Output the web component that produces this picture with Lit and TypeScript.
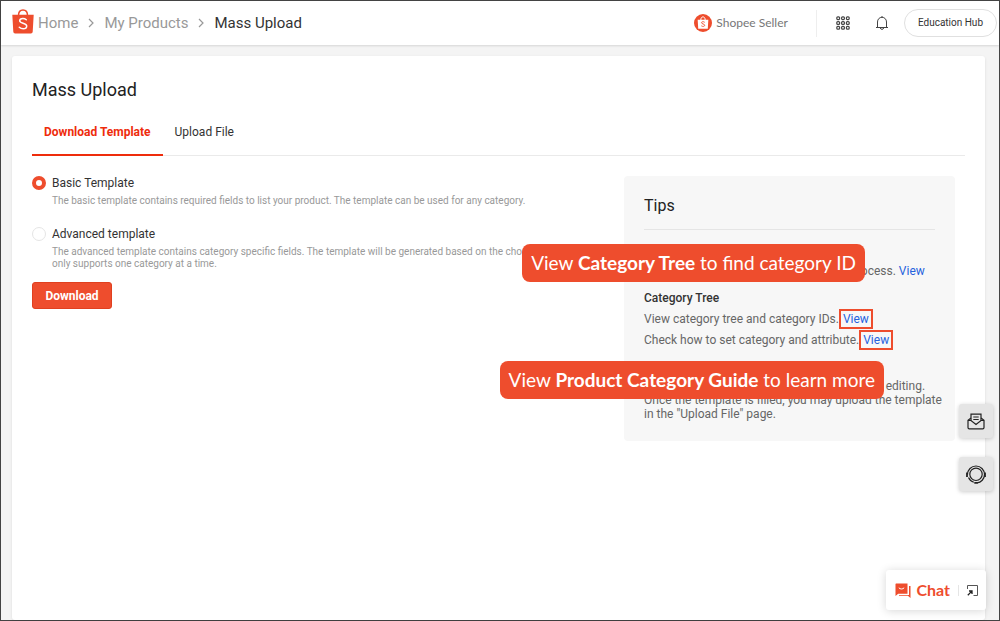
import { LitElement, html, css, svg } from "lit";
import { customElement, state } from "lit/decorators.js";

const bagIcon = html`<svg class="logo" viewBox="0 0 22 25" aria-hidden="true">
  <path d="M6.500 6.500C6.500 3 8.500 1 11 1s4.500 2 4.500 5.500" fill="none" stroke="#ee4d2d" stroke-width="1.500"/>
  <path d="M0.300 5.800h21.400l-1 17a1.800 1.800 0 0 1-1.800 1.700H3.100a1.800 1.800 0 0 1-1.800-1.700z" fill="#ee4d2d"/>
  <path d="M14.300 10.700c-1-.9-2.100-1.300-3.400-1.300-1.900 0-3.200.9-3.200 2.300 0 3.200 7 1.800 7 5.300 0 1.700-1.500 2.800-3.500 2.800-1.600 0-2.900-.6-3.900-1.500" fill="none" stroke="#fff" stroke-width="1.500" stroke-linecap="round"/>
</svg>`;

const sellerIcon = html`<svg class="seller-icon" viewBox="0 0 18 18" aria-hidden="true">
  <circle cx="9" cy="9" r="9" fill="#ee4d2d"/>
  <path d="M6.800 6C6.800 4 7.700 2.900 9 2.900S11.200 4 11.200 6" fill="none" stroke="#fff"/>
  <path d="M3.700 5.700h10.600l-.5 9H4.200z" fill="#fff"/>
  <path d="M10.700 8.300C9.500 7.300 7.500 7.600 7.500 8.700c0 1.500 3.200 1 3.200 2.600 0 1.300-2.200 1.500-3.400.5" fill="none" stroke="#ee4d2d" stroke-width=".9"/>
</svg>`;

const chevron = html`<svg class="chevron" viewBox="0 0 6 10" aria-hidden="true">
  <path d="M1 1l4 4-4 4" fill="none" stroke="#999" stroke-width="1.200"/>
</svg>`;

const dots = [2.2, 7, 11.8];
const gridIcon = html`<svg width="14" height="14" viewBox="0 0 14 14" fill="none" stroke="#444" stroke-width="1.200" aria-hidden="true">
  ${dots.map((y) => dots.map((x) => svg`<rect x=${x - 1.4} y=${y - 1.4} width="2.800" height="2.800" rx="1"/>`))}
</svg>`;

const bellIcon = html`<svg width="12" height="14" viewBox="0 0 12 14" fill="none" stroke="#444" aria-hidden="true">
  <path d="M0 11.500h12M1.500 11.500V6C1.500 3.300 3.400 1.300 6 1.300S10.500 3.300 10.500 6v5.500M6 0v1.300M4.300 12c.3 1.800 3.100 1.800 3.400 0"/>
</svg>`;

const mailIcon = html`<svg width="18" height="17" viewBox="0 0 18 17" fill="none" stroke="#222" stroke-width="1.200" aria-hidden="true">
  <path d="M4 5L1 7.300V14.500a1.300 1.300 0 0 0 1.300 1.300h13.400a1.300 1.300 0 0 0 1.300-1.300V7.300L14 5M1 7.500l3 0 5 4 5-4h3"/>
  <path d="M4 7.500V1.200h10v6.300M6.300 4h5.400M6.300 6.500h5.400"/>
</svg>`;

const headsetIcon = html`<svg width="20" height="19" viewBox="0 0 20 19" fill="none" stroke="#222" aria-hidden="true">
  <path d="M1.500 9.500a8.500 8.500 0 0 1 17 0c0 4.500-3.500 8-7.500 8.300M2.500 12.500c1 2.300 3 4 5.300 4.700" stroke-width="1.200"/>
  <circle cx="10" cy="9.300" r="6.200" stroke-width="1.200"/>
  <path d="M1 7.500v4.500M19 7.500v4.500M8.300 17.800h3.400" stroke-width="1.800"/>
</svg>`;

const chatIcon = html`<svg width="16" height="15" viewBox="0 0 16 15" aria-hidden="true">
  <path d="M1 .5h11.500v10.300H3.200L.5 13V1z" fill="#ee4d2d"/>
  <path d="M14 3h1.500v12l-2.700-2.200H4V12h10z" fill="#ee4d2d"/>
  <path d="M3.800 4.800c1.500 1.600 3.800 1.600 5.400 0" fill="none" stroke="#fff"/>
</svg>`;

const expandIcon = html`<svg width="11" height="11" viewBox="0 0 11 11" fill="none" stroke="#555" aria-hidden="true">
  <path d="M.5 4V.5h10v10H6.500"/>
  <path d="M.8 10.200L4.600 6.400M2 6h3v3" stroke="#222" stroke-width="1.300"/>
</svg>`;

interface TemplateOption {
  id: string;
  title: string;
  note: string;
}

const templates: TemplateOption[] = [
  {
    id: "basic",
    title: "Basic Template",
    note: "The basic template contains required fields to list your product. The template can be used for any category.",
  },
  {
    id: "advanced",
    title: "Advanced template",
    note: "The advanced template contains category specific fields. The template will be generated based on the chosen category and only supports one category at a time.",
  },
];

@customElement("app-root")
export class AppRoot extends LitElement {
  @state() private selected = "basic";

  static styles = css`
    :host {
      display: flex;
      flex-direction: column;
      position: relative;
      box-sizing: border-box;
      min-height: 100vh;
      border: 1px solid #444;
      background: #f4f4f4;
      color: #333;
      font: 12px/14px Roboto, sans-serif;
    }
    * { box-sizing: border-box; }
    h1, h2, h3, p { margin: 0; font-weight: 400; }
    svg { display: block; flex: none; }
    button { font: inherit; color: inherit; background: none; border: 0; padding: 0; cursor: pointer; }
    a { color: #2662dd; text-decoration: none; }

    header {
      display: flex;
      align-items: center;
      height: 44px;
      padding: 0 2px 0 11px;
      background: #fff;
      box-shadow: 0 1px 2px rgba(0, 0, 0, 0.12);
    }
    .logo { width: 22px; height: 25px; margin: 0 4px 4px 0; }
    .crumbs { display: flex; align-items: center; gap: 10px; font-size: 15px; line-height: 18px; }
    .crumbs a { color: #999; }
    .chevron { width: 6px; height: 10px; }
    .seller { display: flex; align-items: center; gap: 4px; margin-left: auto; color: #777; font: 12px/18px Lato, sans-serif; }
    .seller-icon { width: 18px; height: 18px; }
    .tools { display: flex; align-items: center; gap: 26px; margin-left: 28px; padding-left: 19px; height: 27px; border-left: 1px solid #eee; }
    .hub { height: 28px; margin-left: 16px; padding: 0 13px; border: 1px solid #e0e0e0; border-radius: 14px; font-size: 10px; }

    .card {
      flex: 1;
      margin: 11px 14px 0 11px;
      padding: 23px 20px;
      background: #fff;
      border-radius: 3px;
      box-shadow: 0 1px 3px rgba(0, 0, 0, 0.1);
    }
    h1 { font-size: 18px; line-height: 22px; color: #222; }
    .tabs { display: flex; margin-top: 9px; border-bottom: 1px solid #eaeaea; }
    .tab { height: 46px; padding: 0 12px; margin-bottom: -1px; border-bottom: 2px solid transparent; }
    .tab.active { color: #ee2c0c; font-weight: 700; border-color: #ee2c0c; }
    .columns { display: flex; justify-content: space-between; align-items: flex-start; padding: 20px 10px 0 0; }
    form { flex: 0 1 580px; padding-right: 10px; }
    .option { display: grid; grid-template-columns: 14px 1fr; column-gap: 6px; row-gap: 5px; margin-bottom: 20px; align-items: center; }
    .option input {
      appearance: none;
      width: 14px;
      height: 14px;
      margin: 0;
      border: 1px solid #e5e5e5;
      border-radius: 50%;
      background: #fff;
    }
    .option input:checked { border: 4px solid #ee4d2d; }
    .note { grid-column: 2; color: #999; font-size: 10px; line-height: 12px; }
    .option:last-of-type { margin-bottom: 12px; }
    .download {
      width: 80px;
      height: 27px;
      border: 1px solid #e0401f;
      border-radius: 3px;
      background: #ee4d2d;
      color: #fff;
      font-weight: 700;
    }

    .tips { flex: 0 0 331px; padding: 20px 10px 20px 20px; border-radius: 4px; background: #f7f7f7; color: #666; }
    .tips h2 { margin: 0 10px 10px 0; padding-bottom: 13px; border-bottom: 1px solid #e5e5e5; color: #222; font-size: 16px; line-height: 20px; }
    .tips h3 { color: #333; font-size: 12px; line-height: 20px; font-weight: 500; }
    .tips section { display: grid; gap: 1px; }
    .tips section + section { margin-top: 7px; }
    .tips section p { line-height: 20px; }
    .tips section .block { padding-top: 1px; line-height: 14px; }
    .marked { outline: 2px solid #ee4d2d; outline-offset: 1px; padding: 0 1px; }

    .callout {
      position: absolute;
      height: 38px;
      padding: 0 9px;
      border-radius: 8px;
      background: #ee4d2d;
      color: #fff;
      font: 19px/38px Lato, sans-serif;
      white-space: nowrap;
    }
    .callout.tree { top: 243px; right: 134px; }
    .callout.guide { top: 360px; right: 115px; }

    .side { position: absolute; right: 6px; top: 403px; display: grid; gap: 19px; }
    .side button {
      display: grid;
      place-items: center;
      width: 34px;
      height: 34px;
      border-radius: 3px;
      background: #e5e5e5;
      box-shadow: 0 1px 4px rgba(0, 0, 0, 0.2);
    }
    .chat {
      position: absolute;
      right: 13px;
      bottom: 10px;
      display: flex;
      align-items: center;
      height: 40px;
      padding: 0 8px 0 9px;
      border-radius: 3px;
      background: #fff;
      box-shadow: 0 1px 10px rgba(0, 0, 0, 0.16);
    }
    .chat-open { display: flex; align-items: center; gap: 5px; color: #ee4d2d; font: 700 16px/20px Lato, sans-serif; }
    .expand { margin-left: 8px; padding-left: 8px; border-left: 1px solid #e5e5e5; }
  `;

  render() {
    return html`
      <header>
        ${bagIcon}
        <nav class="crumbs" aria-label="Breadcrumb">
          <a href="#home">Home</a>${chevron}<a href="#products">My Products</a>${chevron}<span>Mass Upload</span>
        </nav>
        <div class="seller">${sellerIcon}<span>Shopee Seller</span></div>
        <div class="tools">
          <button aria-label="Apps">${gridIcon}</button>
          <button aria-label="Notifications">${bellIcon}</button>
        </div>
        <button class="hub">Education Hub</button>
      </header>

      <main class="card">
        <h1>Mass Upload</h1>
        <div class="tabs" role="tablist">
          <button class="tab active" role="tab" aria-selected="true">Download Template</button>
          <button class="tab" role="tab" aria-selected="false">Upload File</button>
        </div>
        <div class="columns">
          <form @submit=${(e: Event) => e.preventDefault()}>
            ${templates.map(
              (t) => html`<div class="option">
                <input type="radio" name="template" id=${t.id} .checked=${this.selected === t.id}
                  @change=${() => (this.selected = t.id)} />
                <label for=${t.id}>${t.title}</label>
                <p class="note">${t.note}</p>
              </div>`
            )}
            <button class="download">Download</button>
          </form>
          <aside class="tips">
            <h2>Tips</h2>
            <section>
              <h3>Mass Upload</h3>
              <p>Learn more about product bulk upload process. <a href="#process">View</a></p>
            </section>
            <section>
              <h3>Category Tree</h3>
              <p>View category tree and category IDs. <a class="marked" href="#tree">View</a></p>
              <p>Check how to set category and attribute. <a class="marked" href="#guide">View</a></p>
            </section>
            <section>
              <h3>Edit Template</h3>
              <p class="block">You should download the template for offline editing. Once the template is filled, you may upload the template in the "Upload File" page.</p>
            </section>
          </aside>
        </div>
      </main>

      <div class="callout tree">View <b>Category Tree</b> to find category ID</div>
      <div class="callout guide">View <b>Product Category Guide</b> to learn more</div>

      <div class="side">
        <button aria-label="Messages">${mailIcon}</button>
        <button aria-label="Support">${headsetIcon}</button>
      </div>
      <div class="chat">
        <button class="chat-open">${chatIcon}<span>Chat</span></button>
        <button class="expand" aria-label="Expand chat">${expandIcon}</button>
      </div>
    `;
  }
}
